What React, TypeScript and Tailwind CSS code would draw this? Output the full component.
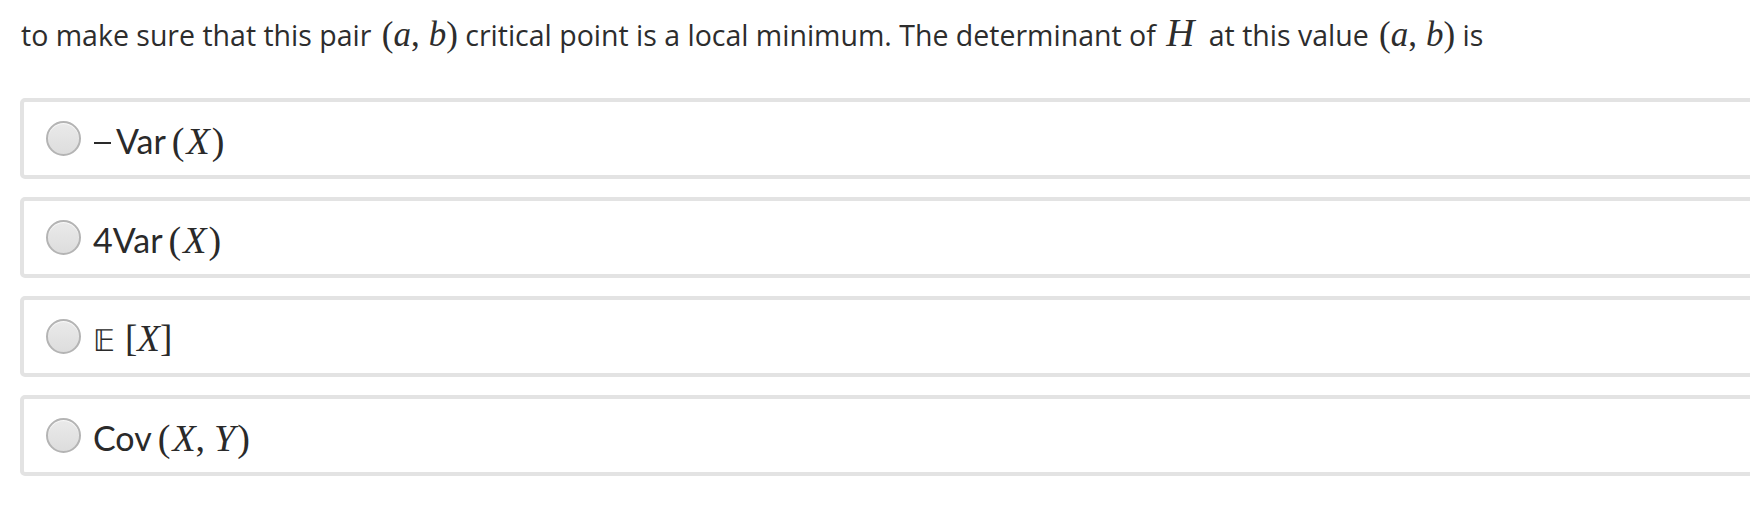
import React from 'react';

const serif = { fontFamily: '"Liberation Serif", "Times New Roman", serif' };

function M({ children }: { children: React.ReactNode }) {
  return (
    <span className="italic" style={serif}>
      {children}
    </span>
  );
}

function P({ children }: { children: React.ReactNode }) {
  return <span style={serif}>{children}</span>;
}

// math group, a bit larger than the running text like MathJax output
function Math({ children, size }: { children: React.ReactNode; size: string }) {
  return <span className={`${size} leading-none whitespace-nowrap`}>{children}</span>;
}

const options: { id: string; label: React.ReactNode }[] = [
  {
    id: 'neg-var',
    label: (
      <>
        <span className="inline-block w-[17px] h-[2px] bg-current align-middle ml-[1px] mr-[5px] mb-[3px]" />
        Var
        <span className="ml-[6px]" />
        <Math size="text-[38px]">
          <P>(</P><span className="ml-[2px]" /><M>X</M><span className="ml-[2px]" /><P>)</P>
        </Math>
      </>
    ),
  },
  {
    id: 'four-var',
    label: (
      <>
        4Var
        <span className="ml-[6px]" />
        <Math size="text-[38px]">
          <P>(</P><span className="ml-[2px]" /><M>X</M><span className="ml-[2px]" /><P>)</P>
        </Math>
      </>
    ),
  },
  {
    id: 'expect',
    label: (
      <>
        <span className="font-['DejaVu_Sans'] font-light text-[30px]">𝔼</span>
        <span className="ml-[10px]" />
        <Math size="text-[37px]">
          <P>[</P><M>X</M><P>]</P>
        </Math>
      </>
    ),
  },
  {
    id: 'cov',
    label: (
      <>
        Cov
        <span className="ml-[6px]" />
        <Math size="text-[38px]">
          <P>(</P><span className="ml-[2px]" /><M>X</M><P>,</P><span className="ml-[9px]" /><M>Y</M><span className="ml-[2px]" /><P>)</P>
        </Math>
      </>
    ),
  },
];

function Radio() {
  return (
    <span className="block w-[35px] h-[35px] shrink-0 rounded-full border-2 border-[#b4b4b4] bg-gradient-to-b from-[#eaeaea] to-[#dddddd] shadow-[inset_0_1px_1px_rgba(255,255,255,0.8)]" />
  );
}

function AB() {
  return (
    <Math size="text-[35px]">
      <span className="ml-[3px]" />
      <P>(</P><M>a</M><P>,</P><span className="ml-[9px]" /><M>b</M><P>)</P>
    </Math>
  );
}

export default function App() {
  return (
    <div className="w-[1750px] h-[518px] overflow-hidden bg-white">
      <p
        className="pl-[21px] pt-[11px] h-[51px] text-[28.5px] leading-[38px] text-[#2d2d2d] whitespace-nowrap"
        style={{ fontFamily: '"Open Sans", sans-serif' }}
      >
        to make sure that this pair <AB /> critical point is a local minimum. The determinant of{' '}
        <Math size="text-[39px]">
          <span className="ml-[3px]" />
          <M>H</M>
          <span className="ml-[7px]" />
        </Math>{' '}
        at this value <AB /> is
      </p>

      <div className="mt-[47px] ml-[20px] w-[1760px] flex flex-col gap-[18px]">
        {options.map((o) => (
          <label
            key={o.id}
            className="h-[81px] flex items-center gap-[12px] pl-[22px] border-4 border-[#e3e3e3] rounded-[5px] bg-white text-[34px] text-[#2a2a2a]"
            style={{ fontFamily: 'Lato, "Liberation Sans", sans-serif' }}
          >
            <Radio />
            <span className="leading-none whitespace-nowrap pt-[2px]">{o.label}</span>
          </label>
        ))}
      </div>
    </div>
  );
}
